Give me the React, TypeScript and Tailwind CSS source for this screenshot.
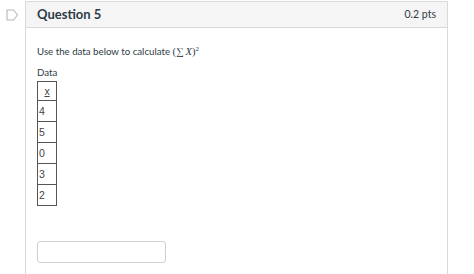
import React from "react";

export default function App() {
  return (
    <div className="w-[474px] h-[274px] bg-white overflow-hidden flex" style={{ fontFamily: "Lato, 'Noto Sans', sans-serif" }}>
      <div className="w-[25px] shrink-0 pt-[9px] pl-[6px]">
        <svg width="13" height="12" viewBox="0 0 13 12">
          <path d="M1 1 H7.5 L11.5 6 L7.5 11 H1 Z" fill="none" stroke="#b5b5b5" strokeWidth="1.1" strokeLinejoin="round" />
        </svg>
      </div>
      <div className="w-[423px] shrink-0 border border-[#d9d9d9] border-b-0 mt-[1px] flex flex-col">
        <div className="h-[26px] shrink-0 bg-[#f5f5f5] border-b border-[#d9d9d9] flex items-center justify-between pl-[11px] pr-[11px]">
          <span className="text-[13px] font-bold text-[#2d3b45]">Question 5</span>
          <span className="text-[10.5px] text-[#2d3b45]">0.2 pts</span>
        </div>
        <div className="pl-[11px] pt-[16px] text-[#2d3b45] flex flex-col items-start">
          <div className="h-[14px] text-[9.7px] leading-[14px] whitespace-nowrap overflow-visible">
            Use the data below to calculate{" "}
            <span className="text-[10.5px]" style={{ fontFamily: "'Liberation Serif', 'DejaVu Serif', serif" }}>
              (∑<span className="ml-[2px]"><i>X</i></span>)<span className="text-[7px] relative top-[-4px]">2</span>
            </span>
          </div>
          <div className="h-[14px] text-[9.7px] leading-[14px] mt-[7px]">Data</div>
          <table className="mt-[2px] border-collapse text-[10.5px] text-[#444]" style={{ fontFamily: "'Liberation Sans', Arial, sans-serif" }}>
            <tbody>
              <tr>
                <td className="border border-[#555] w-[19px] h-[19px] text-center underline p-0 leading-none">x</td>
              </tr>
              {["4", "5", "0", "3", "2"].map((v) => (
                <tr key={v}>
                  <td className="border border-[#555] w-[19px] h-[21px] pl-[1px] p-0 leading-none">{v}</td>
                </tr>
              ))}
            </tbody>
          </table>
          <div className="mt-[35px] w-[129px] h-[22px] border border-[#d0d0d0] rounded-[3px]" />
        </div>
      </div>
    </div>
  );
}
